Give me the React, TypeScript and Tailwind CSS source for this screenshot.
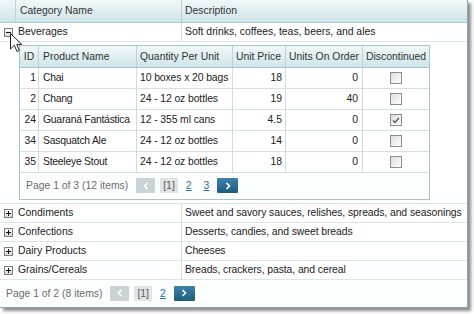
import React from "react";

const products = [
  { id: 1, name: "Chai", qty: "10 boxes x 20 bags", price: "18", order: "0", disc: false },
  { id: 2, name: "Chang", qty: "24 - 12 oz bottles", price: "19", order: "40", disc: false },
  { id: 24, name: "Guaraná Fantástica", qty: "12 - 355 ml cans", price: "4.5", order: "0", disc: true },
  { id: 34, name: "Sasquatch Ale", qty: "24 - 12 oz bottles", price: "14", order: "0", disc: false },
  { id: 35, name: "Steeleye Stout", qty: "24 - 12 oz bottles", price: "18", order: "0", disc: false },
];

const categories = [
  { name: "Condiments", desc: "Sweet and savory sauces, relishes, spreads, and seasonings" },
  { name: "Confections", desc: "Desserts, candies, and sweet breads" },
  { name: "Dairy Products", desc: "Cheeses" },
  { name: "Grains/Cereals", desc: "Breads, crackers, pasta, and cereal" },
];

function ExpandIcon({ open }: { open: boolean }) {
  return (
    <div className="w-[9px] h-[9px] border border-[#7d7d7d] bg-gradient-to-b from-[#ffffff] to-[#d8d8d8] relative">
      <div className="absolute left-[1px] right-[1px] top-[3px] h-[1px] bg-[#111]" />
      {!open && <div className="absolute top-[1px] bottom-[1px] left-[3px] w-[1px] bg-[#111]" />}
    </div>
  );
}

function Checkbox({ checked }: { checked: boolean }) {
  return (
    <div className="w-[12px] h-[12px] border border-[#8e8e8e] bg-gradient-to-br from-[#dcdcdc] to-[#ffffff] flex items-center justify-center">
      {checked && (
        <svg width="8" height="7" viewBox="0 0 8 7">
          <path d="M1 3.5 L3 5.5 L7 1" stroke="#5a5a5a" strokeWidth="1.4" fill="none" />
        </svg>
      )}
    </div>
  );
}

function Pager({ text, pages }: { text: string; pages: string[] }) {
  return (
    <div className="flex items-center gap-[4px]">
      <span className="text-[#6d6d6d] mr-[4px]">{text}</span>
      <div className="w-[19px] h-[15px] bg-[#c9d2d4] rounded-[1px] flex items-center justify-center">
        <svg width="6" height="8" viewBox="0 0 6 8">
          <path d="M4.5 1 L1.5 4 L4.5 7" stroke="#ffffff" strokeWidth="1.6" fill="none" />
        </svg>
      </div>
      <div className="h-[15px] px-[3px] ml-[1px] bg-[#e1e4e5] text-[#52606b] flex items-center">[1]</div>
      {pages.map((p) => (
        <span key={p} className="text-[#2a6ea3] underline mx-[4px]">
          {p}
        </span>
      ))}
      <div className="w-[21px] h-[15px] bg-gradient-to-b from-[#3f83a8] to-[#1d5b80] rounded-[1px] flex items-center justify-center">
        <svg width="6" height="8" viewBox="0 0 6 8">
          <path d="M1.5 1 L4.5 4 L1.5 7" stroke="#ffffff" strokeWidth="1.6" fill="none" />
        </svg>
      </div>
    </div>
  );
}

export default function App() {
  const hdr = "bg-gradient-to-b from-[#f1f8f9] to-[#cfe5e9]";
  return (
    <div
      className="w-[474px] h-[314px] bg-white relative text-[10.4px] text-[#222]"
      style={{ fontFamily: '"Liberation Sans", Arial, sans-serif' }}
    >
      <div className="w-[468px] h-[308px] border-r border-b border-[#8fa7ac] shadow-[3px_3px_3px_rgba(0,0,0,0.45)] flex flex-col bg-white">
        {/* master header */}
        <div className={`flex h-[23px] border-b border-[#a9c9d0] ${hdr} text-[#333]`}>
          <div className="w-[16px] border-r border-[#b8d3d9]" />
          <div className="w-[166px] border-r border-[#b8d3d9] pl-[4px] flex items-center">Category Name</div>
          <div className="flex-1 pl-[3px] flex items-center">Description</div>
        </div>
        {/* beverages row */}
        <div className="flex h-[19px] border-b border-[#dbe6e9]">
          <div className="w-[16px] flex items-center justify-center">
            <ExpandIcon open />
          </div>
          <div className="w-[166px] border-r border-[#d3e1e4] pl-[2px] flex items-center">Beverages</div>
          <div className="flex-1 pl-[3px] flex items-center">Soft drinks, coffees, teas, beers, and ales</div>
        </div>
        {/* detail */}
        <div className="h-[162px] border-b border-[#dbe6e9] pl-[19px] pt-[3px]">
          <div className="w-[411px] border border-[#a9c5cb]">
            <div className={`flex h-[22px] border-b border-[#a9c9d0] ${hdr} text-[#333]`}>
              <div className="w-[19px] border-r border-[#b8d3d9] flex items-center justify-center">ID</div>
              <div className="w-[98px] border-r border-[#b8d3d9] pl-[4px] flex items-center">Product Name</div>
              <div className="w-[96px] border-r border-[#b8d3d9] pl-[3px] flex items-center">Quantity Per Unit</div>
              <div className="w-[53px] border-r border-[#b8d3d9] pl-[3px] flex items-center">Unit Price</div>
              <div className="w-[77px] border-r border-[#b8d3d9] pl-[3px] flex items-center">Units On Order</div>
              <div className="flex-1 pl-[3px] flex items-center">Discontinued</div>
            </div>
            {products.map((p) => (
              <div key={p.id} className="flex h-[21px] border-b border-[#d4e1e4]">
                <div className="w-[19px] border-r border-[#cddde0] pr-[2px] flex items-center justify-end">{p.id}</div>
                <div className="w-[98px] border-r border-[#cddde0] pl-[4px] flex items-center whitespace-nowrap overflow-hidden tracking-[-0.25px]">{p.name}</div>
                <div className="w-[96px] border-r border-[#cddde0] pl-[3px] flex items-center whitespace-nowrap overflow-hidden tracking-[-0.1px]">{p.qty}</div>
                <div className="w-[53px] border-r border-[#cddde0] pr-[3px] flex items-center justify-end">{p.price}</div>
                <div className="w-[77px] border-r border-[#cddde0] pr-[4px] flex items-center justify-end">{p.order}</div>
                <div className="flex-1 flex items-center justify-center">
                  <Checkbox checked={p.disc} />
                </div>
              </div>
            ))}
            <div className="h-[26px] pl-[6px] flex items-center bg-[#fcfefe]">
              <Pager text="Page 1 of 3 (12 items)" pages={["2", "3"]} />
            </div>
          </div>
        </div>
        {categories.map((c) => (
          <div key={c.name} className="flex h-[19px] border-b border-[#dbe6e9]">
            <div className="w-[16px] flex items-center justify-center">
              <ExpandIcon open={false} />
            </div>
            <div className="w-[166px] border-r border-[#d3e1e4] pl-[2px] flex items-center">{c.name}</div>
            <div className="flex-1 pl-[3px] flex items-center whitespace-nowrap overflow-hidden tracking-[-0.08px]">{c.desc}</div>
          </div>
        ))}
        <div className="flex-1 pl-[6px] flex items-center bg-[#fcfefe]">
          <Pager text="Page 1 of 2 (8 items)" pages={["2"]} />
        </div>
      </div>
      {/* mouse cursor */}
      <svg className="absolute left-[10px] top-[33px]" width="13" height="20" viewBox="0 0 13 20">
        <path d="M0.5 0.5 L0.5 16 L4.3 12.3 L7 18.5 L9.4 17.5 L6.8 11.4 L11.8 11.4 Z" fill="#ffffff" stroke="#222" strokeWidth="1" />
      </svg>
    </div>
  );
}
